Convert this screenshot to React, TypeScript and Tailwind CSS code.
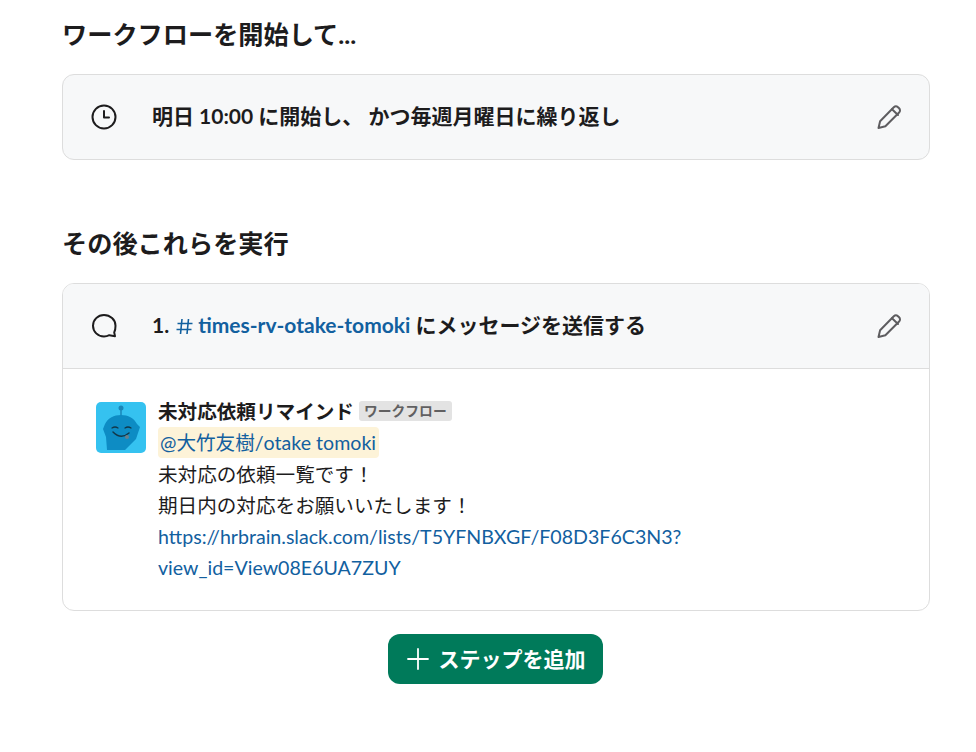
const font = "font-['Lato','Noto_Sans_CJK_JP',sans-serif]";

function ClockIcon() {
  return (
    <svg width="26" height="26" viewBox="0 0 26 26" fill="none" stroke="#1d1c1d" strokeWidth="2" strokeLinecap="round" strokeLinejoin="round">
      <circle cx="13" cy="13" r="11.5" />
      <path d="M13 7v6.5h5" />
    </svg>
  );
}

function BubbleIcon() {
  return (
    <svg width="26" height="26" viewBox="0 0 26 26" fill="none" stroke="#1d1c1d" strokeWidth="2" strokeLinejoin="round">
      <path d="M13 2C6.900 2 2 6.700 2 12.700c0 6 4.900 10.800 11 10.800 2 0 3.800-.5 5.300-1.300l5.700 1-.8-3.800c1-1.800 1.300-4 1.300-6.700C24.500 6.700 19.100 2 13 2Z" />
    </svg>
  );
}

function PencilIcon() {
  return (
    <svg width="26" height="26" viewBox="0 0 26 26" fill="none" stroke="#5e5d60" strokeWidth="2" strokeLinejoin="round" strokeLinecap="round">
      <path d="M2.500 24l1.600-6.800L17.800 3.300c1.200-1.200 3-1.200 4.200-.1l1.100 1.100c1.200 1.200 1.200 3 0 4.200L9.400 22.300 2.500 24Z" />
      <path d="M16 5.200l6 5.800" />
    </svg>
  );
}

function HashIcon() {
  return (
    <svg className="inline-block align-[-2px] ml-[7px] mr-[5px]" width="17" height="17" viewBox="0 0 17 17" fill="none" stroke="#12609f" strokeWidth="1.600">
      <path d="M6 1 4.500 16M12.500 1 11 16M1.500 5.500h15M.5 11.500h15" />
    </svg>
  );
}

function RobotAvatar() {
  return (
    <div className="w-[50px] h-[51px] mt-[4px] rounded-[5px] bg-[#35c2f0] shrink-0">
      <svg width="50" height="51" viewBox="0 0 50 51" fill="none">
        <circle cx="25" cy="6" r="2.500" fill="#1a86b8" />
        <path d="M25 8v6" stroke="#1a86b8" strokeWidth="1.500" />
        <path d="M9 22c3-6 9-9 16-9s13 3 16 9l3 3-2 6-2 6-11 11H11l-1-13-3-8 2-5Z" fill="#0d8cc4" />
        <path d="M16 26q3-2 6 0M29 26q3-2 6 0" stroke="#12384a" strokeWidth="1.300" strokeLinecap="round" />
        <path d="M17 30q8 8 16 1" stroke="#12384a" strokeWidth="1.500" strokeLinecap="round" />
        <circle cx="31" cy="35" r="2" fill="#6b7f88" />
      </svg>
    </div>
  );
}

export default function App() {
  return (
    <div className={`${font} w-[976px] h-[752px] bg-white text-[#1d1c1d] overflow-hidden pl-[62px] pr-[46px] pt-[17px]`}>
      <h2 className="text-[25.200px] leading-[34px] font-bold">ワークフローを開始して...</h2>

      <div className="mt-[23px] h-[86px] rounded-[12px] border border-[#dddddd] bg-[#f7f8f9] flex items-center pl-[28px] pr-[27px]">
        <ClockIcon />
        <span className="ml-[35px] pb-[2px] text-[21px] font-bold flex-1">明日 10:00 に開始し、 かつ毎週月曜日に繰り返し</span>
        <PencilIcon />
      </div>

      <h2 className="mt-[66px] text-[25.200px] leading-[34px] font-bold">その後これらを実行</h2>

      <div className="mt-[23px] rounded-[12px] border border-[#dddddd] overflow-hidden">
        <div className="h-[85px] bg-[#f7f8f9] border-b border-[#dddddd] flex items-center pl-[28px] pr-[27px]">
          <BubbleIcon />
          <span className="ml-[35px] pb-[2px] text-[21px] font-bold flex-1">
            1.<HashIcon /><span className="text-[#12609f]">times-rv-otake-tomoki</span> にメッセージを送信する
          </span>
          <PencilIcon />
        </div>
        <div className="flex gap-[12px] pl-[33px] pr-[220px] pt-[29px] h-[241px]">
          <RobotAvatar />
          <div className="text-[19.600px] leading-[31px]">
            <div className="flex items-center gap-[5px] h-[26px] mb-[3px]">
              <span className="font-bold">未対応依頼リマインド</span>
              <span className="bg-[#e3e3e3] rounded-[3px] px-[5px] text-[13.800px] leading-[20px] font-bold text-[#616061]">ワークフロー</span>
            </div>
            <div className="mb-[1px]">
              <span className="inline-block bg-[#fdf3d8] rounded-[4px] pl-[2px] pr-[3px] text-[#12609f]">@大竹友樹/otake tomoki</span>
            </div>
            <div>未対応の依頼一覧です！</div>
            <div>期日内の対応をお願いいたします！</div>
            <div className="text-[#12609f] break-all">https://hrbrain.slack.com/lists/T5YFNBXGF/F08D3F6C3N3?<br />view_id=View08E6UA7ZUY</div>
          </div>
        </div>
      </div>

      <div className="mt-[23px] flex justify-center">
        <button className="w-[215px] h-[50px] -ml-[2px] pb-[1px] pl-[2px] rounded-[12px] bg-[#007a5a] text-white text-[21px] font-bold flex items-center justify-center gap-[10px]">
          <svg width="22" height="22" viewBox="0 0 22 22" fill="none" stroke="#fff" strokeWidth="1.800" strokeLinecap="round">
            <path d="M11 1v20M1 11h20" />
          </svg>
          ステップを追加
        </button>
      </div>
    </div>
  );
}
